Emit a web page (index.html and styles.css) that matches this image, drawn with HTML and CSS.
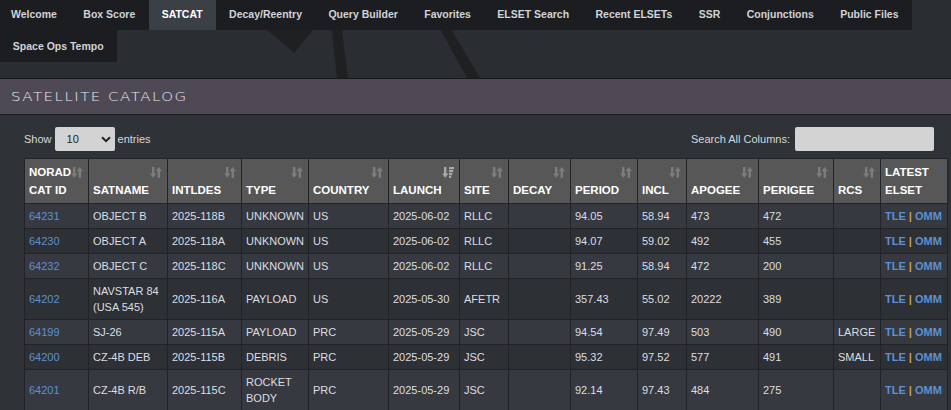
FILE: index.html
```html
<!DOCTYPE html>
<html lang="en">
<head>
<meta charset="utf-8">
<title>SATCAT</title>
<link rel="stylesheet" href="styles.css">
</head>
<body>
<div class="top">
  <svg class="deco" width="951" height="78" viewBox="0 0 951 78" aria-hidden="true">
    <polygon points="258,22 320,22 294,53" />
    <polygon points="331,22 341,22 348,78 337,78" />
    <polygon points="436,22 447,22 480,78 467,78" />
  </svg>
  <ul class="nav">
    <li><a href="#">Welcome</a></li>
    <li><a href="#">Box Score</a></li>
    <li class="active"><a href="#">SATCAT</a></li>
    <li><a href="#">Decay/Reentry</a></li>
    <li><a href="#">Query Builder</a></li>
    <li><a href="#">Favorites</a></li>
    <li><a href="#">ELSET Search</a></li>
    <li><a href="#">Recent ELSETs</a></li>
    <li><a href="#">SSR</a></li>
    <li><a href="#">Conjunctions</a></li>
    <li><a href="#">Public Files</a></li>
    <li><a href="#">Space Ops Tempo</a></li>
  </ul>
</div>
<div class="titlebar"><h1 class="title">Satellite Catalog</h1></div>
<div class="panel">
  <div class="controls">
    <div class="len">Show
      <div class="select"><span>10</span>
        <svg width="10" height="7" viewBox="0 0 10 7"><path d="M1 1.2 L5 5.2 L9 1.2" fill="none" stroke="#222" stroke-width="2"/></svg>
      </div>
      entries</div>
    <div class="search">Search All Columns: <span class="input"></span></div>
  </div>
  <table class="grid">
    <colgroup>
      <col class="w64"><col class="w79"><col class="w74"><col class="w67"><col class="w80"><col class="w71"><col class="w49"><col class="w62"><col class="w67"><col class="w49"><col class="w72"><col class="w75"><col class="w47"><col class="w67">
    </colgroup>
    <thead>
      <tr>
        <th>NORAD CAT ID<svg class="sort" viewBox="0 0 12 11"><path d="M2 0h2.4v6.5h2.1L3.2 10.8 0 6.5h2z M7.6 10.8H10V4.3h2.1L8.8 0 5.5 4.3h2.1z"/></svg></th>
        <th>SATNAME<svg class="sort" viewBox="0 0 12 11"><path d="M2 0h2.4v6.5h2.1L3.2 10.8 0 6.5h2z M7.6 10.8H10V4.3h2.1L8.8 0 5.5 4.3h2.1z"/></svg></th>
        <th>INTLDES<svg class="sort" viewBox="0 0 12 11"><path d="M2 0h2.4v6.5h2.1L3.2 10.8 0 6.5h2z M7.6 10.8H10V4.3h2.1L8.8 0 5.5 4.3h2.1z"/></svg></th>
        <th>TYPE<svg class="sort" viewBox="0 0 12 11"><path d="M2 0h2.4v6.5h2.1L3.2 10.8 0 6.5h2z M7.6 10.8H10V4.3h2.1L8.8 0 5.5 4.3h2.1z"/></svg></th>
        <th>COUNTRY<svg class="sort" viewBox="0 0 12 11"><path d="M2 0h2.4v6.5h2.1L3.2 10.8 0 6.5h2z M7.6 10.8H10V4.3h2.1L8.8 0 5.5 4.3h2.1z"/></svg></th>
        <th>LAUNCH<svg class="sort on" viewBox="0 0 12 11"><path d="M2 0h2.4v6.5h2.1L3.2 10.8 0 6.5h2z M7 0h5v2.2H7z M7 3h4.2v2.2H7z M7 6h3.2v2.2H7z M7 9h2.2v2H7z"/></svg></th>
        <th>SITE<svg class="sort" viewBox="0 0 12 11"><path d="M2 0h2.4v6.5h2.1L3.2 10.8 0 6.5h2z M7.6 10.8H10V4.3h2.1L8.8 0 5.5 4.3h2.1z"/></svg></th>
        <th>DECAY<svg class="sort" viewBox="0 0 12 11"><path d="M2 0h2.4v6.5h2.1L3.2 10.8 0 6.5h2z M7.6 10.8H10V4.3h2.1L8.8 0 5.5 4.3h2.1z"/></svg></th>
        <th>PERIOD<svg class="sort" viewBox="0 0 12 11"><path d="M2 0h2.4v6.5h2.1L3.2 10.8 0 6.5h2z M7.6 10.8H10V4.3h2.1L8.8 0 5.5 4.3h2.1z"/></svg></th>
        <th>INCL<svg class="sort" viewBox="0 0 12 11"><path d="M2 0h2.4v6.5h2.1L3.2 10.8 0 6.5h2z M7.6 10.8H10V4.3h2.1L8.8 0 5.5 4.3h2.1z"/></svg></th>
        <th>APOGEE<svg class="sort" viewBox="0 0 12 11"><path d="M2 0h2.4v6.5h2.1L3.2 10.8 0 6.5h2z M7.6 10.8H10V4.3h2.1L8.8 0 5.5 4.3h2.1z"/></svg></th>
        <th>PERIGEE<svg class="sort" viewBox="0 0 12 11"><path d="M2 0h2.4v6.5h2.1L3.2 10.8 0 6.5h2z M7.6 10.8H10V4.3h2.1L8.8 0 5.5 4.3h2.1z"/></svg></th>
        <th>RCS<svg class="sort" viewBox="0 0 12 11"><path d="M2 0h2.4v6.5h2.1L3.2 10.8 0 6.5h2z M7.6 10.8H10V4.3h2.1L8.8 0 5.5 4.3h2.1z"/></svg></th>
        <th>LATEST ELSET</th>
      </tr>
    </thead>
    <tbody>
      <tr><td><a href="#">64231</a></td><td>OBJECT B</td><td>2025-118B</td><td>UNKNOWN</td><td>US</td><td>2025-06-02</td><td>RLLC</td><td></td><td>94.05</td><td>58.94</td><td>473</td><td>472</td><td></td><td class="el"><a href="#">TLE</a> <span class="sep">|</span> <a href="#">OMM</a></td></tr>
      <tr><td><a href="#">64230</a></td><td>OBJECT A</td><td>2025-118A</td><td>UNKNOWN</td><td>US</td><td>2025-06-02</td><td>RLLC</td><td></td><td>94.07</td><td>59.02</td><td>492</td><td>455</td><td></td><td class="el"><a href="#">TLE</a> <span class="sep">|</span> <a href="#">OMM</a></td></tr>
      <tr><td><a href="#">64232</a></td><td>OBJECT C</td><td>2025-118C</td><td>UNKNOWN</td><td>US</td><td>2025-06-02</td><td>RLLC</td><td></td><td>91.25</td><td>58.94</td><td>472</td><td>200</td><td></td><td class="el"><a href="#">TLE</a> <span class="sep">|</span> <a href="#">OMM</a></td></tr>
      <tr><td><a href="#">64202</a></td><td>NAVSTAR 84 (USA 545)</td><td>2025-116A</td><td>PAYLOAD</td><td>US</td><td>2025-05-30</td><td>AFETR</td><td></td><td>357.43</td><td>55.02</td><td>20222</td><td>389</td><td></td><td class="el"><a href="#">TLE</a> <span class="sep">|</span> <a href="#">OMM</a></td></tr>
      <tr><td><a href="#">64199</a></td><td>SJ-26</td><td>2025-115A</td><td>PAYLOAD</td><td>PRC</td><td>2025-05-29</td><td>JSC</td><td></td><td>94.54</td><td>97.49</td><td>503</td><td>490</td><td>LARGE</td><td class="el"><a href="#">TLE</a> <span class="sep">|</span> <a href="#">OMM</a></td></tr>
      <tr><td><a href="#">64200</a></td><td>CZ-4B DEB</td><td>2025-115B</td><td>DEBRIS</td><td>PRC</td><td>2025-05-29</td><td>JSC</td><td></td><td>95.32</td><td>97.52</td><td>577</td><td>491</td><td>SMALL</td><td class="el"><a href="#">TLE</a> <span class="sep">|</span> <a href="#">OMM</a></td></tr>
      <tr><td><a href="#">64201</a></td><td>CZ-4B R/B</td><td>2025-115C</td><td>ROCKET BODY</td><td>PRC</td><td>2025-05-29</td><td>JSC</td><td></td><td>92.14</td><td>97.43</td><td>484</td><td>275</td><td></td><td class="el"><a href="#">TLE</a> <span class="sep">|</span> <a href="#">OMM</a></td></tr>
    </tbody>
  </table>
</div>
</body>
</html>
```
FILE: styles.css
```css
html { overflow: hidden; }
body {
  margin: 0;
  background: #2f3338;
  font-family: "Liberation Sans", Arial, sans-serif;
  font-size: 11px;
  color: #dcdee1;
}
a { text-decoration: none; }

.top {
  display: flow-root;
  position: relative;
  height: 78px;
  background: #2a2d32;
  border-bottom: 1px solid #16171a;
}
.deco {
  position: absolute;
  left: 0;
  top: 0;
  fill: #1f2022;
}
.nav {
  position: relative;
  display: flex;
  flex-wrap: wrap;
  list-style: none;
  margin: -2px 0 0;
  padding: 0;
}
.nav li {
  background: #1c1d21;
  height: 32px;
  line-height: 32px;
}
.nav a {
  display: block;
  padding: 0 13.6px 0 12.8px;
  color: #d0d3d7;
  font-weight: bold;
  font-size: 10.5px;
}
.nav li:first-child a { padding-left: 11px; }
.nav li.active { background: #3b3f46; }
.nav li.active a { color: #ffffff; }

.titlebar {
  height: 35px;
  background: #4f4956;
  border-bottom: 1px solid #1c1c1f;
  display: flex;
  align-items: center;
  padding-left: 11px;
}
.title {
  margin: 0;
  font-family: "DejaVu Sans", sans-serif;
  font-weight: 200;
  font-size: 12px;
  letter-spacing: 1.2px;
  text-transform: uppercase;
  color: #ebe9f0;
  transform: scaleX(1.25);
  transform-origin: left center;
}

.panel {
  padding: 12px 17px 20px 24px;
}
.controls {
  display: flex;
  justify-content: space-between;
  align-items: center;
  height: 24px;
  color: #d4d7db;
}
.len, .search {
  display: flex;
  align-items: center;
  gap: 3px;
}
.search { gap: 5px; }
.select {
  width: 60px;
  height: 24px;
  box-sizing: border-box;
  background: #d3d3d3;
  border-radius: 2px;
  display: flex;
  align-items: center;
  justify-content: space-between;
  padding: 0 4px 0 12px;
  color: #222;
}
.input {
  display: block;
  width: 139px;
  height: 24px;
  background: #d3d3d3;
  border-radius: 2px;
}

.grid {
  margin-top: 7px;
  width: 923px;
  table-layout: fixed;
  border-collapse: collapse;
}
.w64 { width: 64px; }
.w79 { width: 79px; }
.w74 { width: 74px; }
.w67 { width: 67px; }
.w80 { width: 80px; }
.w71 { width: 71px; }
.w49 { width: 49px; }
.w62 { width: 62px; }
.w72 { width: 72px; }
.w75 { width: 75px; }
.w47 { width: 47px; }

.grid th {
  position: relative;
  background: #575757;
  color: #ffffff;
  font-weight: bold;
  font-size: 11.5px;
  line-height: 18px;
  text-align: left;
  vertical-align: bottom;
  padding: 4px 4px 4px 4px;
  border: 1px solid #222326;
}
.sort {
  position: absolute;
  top: 8px;
  right: 5px;
  width: 12px;
  height: 11px;
  fill: #7d7d7d;
}
.sort.on { fill: #a9a9a9; }

.grid td {
  padding: 4px 4px;
  line-height: 16px;
  vertical-align: middle;
  border: 1px solid #222326;
  color: #dcdee1;
}
.grid tbody tr:nth-child(odd) td { background: #363940; }
.grid tbody tr:nth-child(even) td { background: #2d3035; }
.grid td a { color: #5e90d2; }
.grid td.el a { font-weight: bold; }
.sep { color: #c9a253; font-weight: bold; }
```
